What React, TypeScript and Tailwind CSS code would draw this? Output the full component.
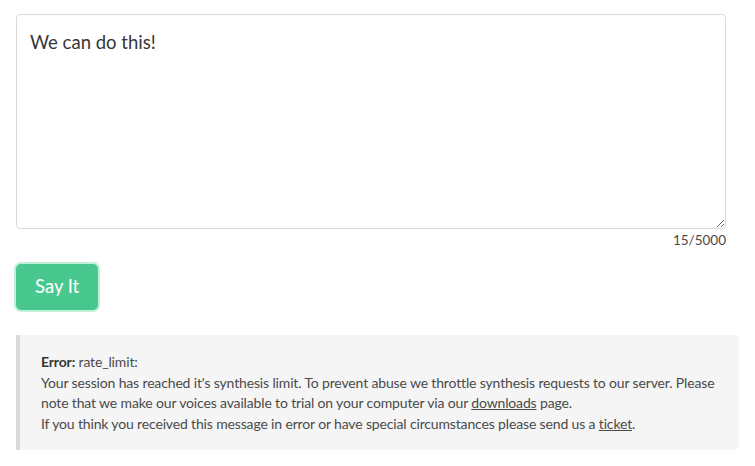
import React, { useState } from "react";

const font = { fontFamily: 'Lato, "Noto Sans", sans-serif' };

const App: React.FC = () => {
  const [text, setText] = useState("We can do this!");

  return (
    <div className="min-h-screen bg-white pl-4 pt-[14px] text-[#4a4a4a]" style={font}>
      <div className="w-[710px]">
        <textarea
          value={text}
          onChange={(e) => setText(e.target.value)}
          className="block h-[215px] w-full resize-y rounded border border-[#dbdbdb] px-[13px] py-[14px] text-[18.5px] leading-[27px] text-[#363636] outline-none"
        />
        <div className="mt-[1px] text-right text-[13.5px] leading-[20px] text-[#4a4a4a]">
          {text.length}/5000
        </div>
      </div>

      <button className="mt-[14px] h-[46px] rounded-[5px] bg-[#48c78e] px-[19px] text-[18.5px] text-white ring-2 ring-[#bff0d8]">
        Say It
      </button>

      <div className="mt-[25px] w-[723px] rounded-r-[5px] border-l-[4px] border-[#dbdbdb] bg-[#f5f5f5] pb-[16px] pl-[21px] pr-2 pt-[17px] text-[14px] leading-[20.5px] tracking-[-0.15px] text-[#4a4a4a]">
        <div>
          <strong className="font-bold text-[#363636]">Error:</strong> rate_limit:
        </div>
        <div>
          Your session has reached it's synthesis limit. To prevent abuse we
          throttle synthesis requests to our server. Please note that we make
          our voices available to trial on your computer via our{" "}
          <a href="#" className="underline">
            downloads
          </a>{" "}
          page.
        </div>
        <div>
          If you think you received this message in error or have special
          circumstances please send us a{" "}
          <a href="#" className="underline">
            ticket
          </a>
          .
        </div>
      </div>
    </div>
  );
};

export default App;
